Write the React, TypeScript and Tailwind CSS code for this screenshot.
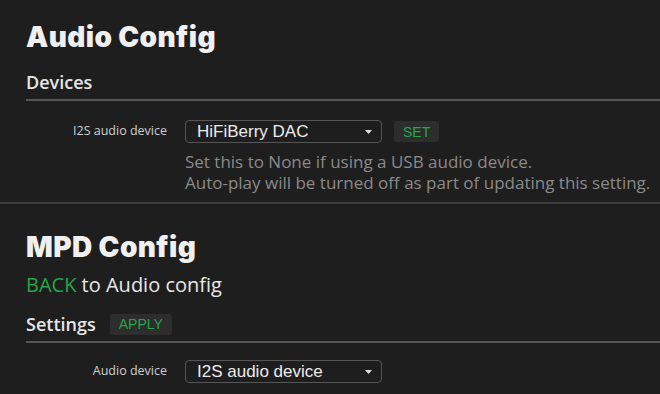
import React from "react";

function Select({ value }: { value: string }) {
  return (
    <div className="flex h-[23px] w-[197px] items-center justify-between rounded-[4px] border border-[#555] bg-[#1e1e1e] pl-[11px] pr-[9px]">
      <span className="font-['Liberation_Sans'] text-[17px] leading-none text-[#ececec]">{value}</span>
      <svg width="7" height="4" viewBox="0 0 7 4" className="mt-[1px]">
        <path d="M0 0 L7 0 L3.5 4 Z" fill="#e0e0e0" />
      </svg>
    </div>
  );
}

function Btn({ children }: { children: React.ReactNode }) {
  return (
    <div className="flex h-[21px] items-center rounded-[3px] bg-[#2d2d2d] px-[9px] font-['Liberation_Sans'] text-[14px] leading-none text-[#25a649]">
      {children}
    </div>
  );
}

export default function App() {
  return (
    <div className="min-h-[394px] w-[660px] overflow-hidden bg-[#1e1e1e] font-['Open_Sans',sans-serif] text-[#e8e8e8]">
      <section className="pl-[26px] pt-[21px]">
        <h1 className="font-['Inter',sans-serif] text-[28px] font-black leading-[32px] tracking-[0.4px] text-[#f0f0f0]">Audio Config</h1>
        <h2 className="mt-[18px] text-[18px] font-semibold leading-[22px] text-[#e6e6e6]">Devices</h2>
        <div className="mt-[6px] h-[2px] bg-[#555]" />
        <div className="mt-[19px] flex items-center">
          <div className="w-[141px] text-right text-[12.5px] text-[#cfcfcf]">I2S audio device</div>
          <div className="ml-[18px] flex items-center gap-[12px]">
            <Select value="HiFiBerry DAC" />
            <Btn>SET</Btn>
          </div>
        </div>
        <div className="ml-[159px] mt-[8px] text-[17px] leading-[21px] text-[#8a8a8a]">
          <p>Set this to None if using a USB audio device.</p>
          <p>Auto-play will be turned off as part of updating this setting.</p>
        </div>
      </section>
      <div className="mt-[9px] h-[2px] bg-[#3c3c3c]" />
      <section className="pl-[26px] pt-[27px]">
        <h1 className="font-['Inter',sans-serif] text-[28px] font-black leading-[32px] tracking-[0.4px] text-[#f0f0f0]">MPD Config</h1>
        <p className="mt-[11px] text-[20px] leading-[22px] text-[#e8e8e8]">
          <span className="text-[#25a649]">BACK</span> to Audio config
        </p>
        <div className="mt-[17px] flex items-center gap-[14px]">
          <h2 className="text-[18px] font-semibold leading-[22px] text-[#e6e6e6]">Settings</h2>
          <Btn>APPLY</Btn>
        </div>
        <div className="mt-[6px] h-[2px] bg-[#555]" />
        <div className="mt-[17px] flex items-center">
          <div className="w-[141px] text-right text-[12.5px] text-[#cfcfcf]">Audio device</div>
          <div className="ml-[18px]">
            <Select value="I2S audio device" />
          </div>
        </div>
      </section>
    </div>
  );
}
